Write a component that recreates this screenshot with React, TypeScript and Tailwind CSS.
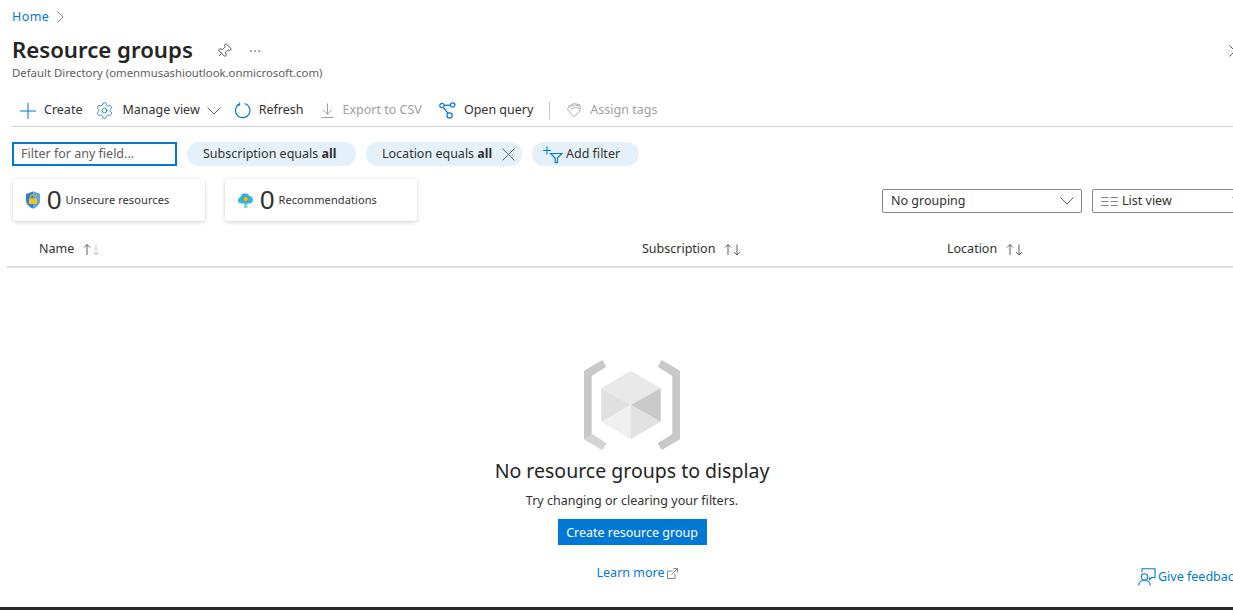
import { Ellipsis, Pin, Settings } from "lucide-react";

const PlusIcon = () => (
  <svg width="16" height="16" viewBox="0 0 16 16" fill="none" stroke="#0078d4" strokeWidth="1">
    <path d="M8 0v16M0 8h16" />
  </svg>
);

const ChevronDownIcon = ({ color = "#605e5c" }: { color?: string }) => (
  <svg width="14" height="8" viewBox="0 0 14 8" fill="none" stroke={color} strokeWidth="1">
    <path d="M0.500 0.500 7 7l6.500-6.500" />
  </svg>
);

const ChevronRightIcon = ({ color = "#8a8886" }: { color?: string }) => (
  <svg width="7" height="12" viewBox="0 0 7 12" fill="none" stroke={color} strokeWidth="1">
    <path d="M0.500 0.500 6 6l-5.500 5.500" />
  </svg>
);

const CloseIcon = () => (
  <svg width="13" height="13" viewBox="0 0 13 13" fill="none" stroke="#605e5c" strokeWidth="1">
    <path d="M0.500 0.500 12.500 12.500M12.500 0.500 0.500 12.500" />
  </svg>
);

const RefreshIcon = () => (
  <svg width="17" height="17" viewBox="0 0 17 17" fill="none" stroke="#0078d4" strokeWidth="1.200">
    <path d="M5.200 2.200A7.200 7.200 0 1 0 10.500 1.500" />
    <path d="M5.600 0.400V3h-2.800" strokeWidth="1.100" />
  </svg>
);

const ExportIcon = () => (
  <svg width="15" height="16" viewBox="0 0 14 16" fill="none" stroke="#a19f9d" strokeWidth="1">
    <path d="M7 0.500V11M2.500 6.800 7 11.200l4.500-4.400M1 14.500h12" />
  </svg>
);

const QueryIcon = () => (
  <svg width="17" height="17" viewBox="0 0 17 17" fill="none" stroke="#0078d4" strokeWidth="1.200">
    <circle cx="3" cy="3.500" r="2.200" />
    <circle cx="13.700" cy="3" r="2.200" />
    <circle cx="10.500" cy="13.500" r="2.600" />
    <path d="M5.200 3.400 11.500 3.100M4.200 5.400 8.900 11.200" />
  </svg>
);

const TagIcon = () => (
  <svg width="16" height="17" viewBox="0 0 16 17" fill="none" stroke="#b3b0ad" strokeWidth="1">
    <path d="M1.500 7.500 8 14.800l6-5.600V3L8 1.500 3 4z" />
    <path d="M4 4.500 9.500 2.800l4 1.600M4.500 7l5.500-2 3.800 2" />
  </svg>
);

const FilterAddIcon = () => (
  <svg width="20" height="18" viewBox="0 0 20 18" fill="none" stroke="#0078d4" strokeWidth="1.100">
    <path d="M0 4.500h8M4 0.500v8" />
    <path d="M7.500 7.500h11.500l-4.600 4.500v4.600h-2.200V12z" />
  </svg>
);

const ShieldIcon = () => (
  <svg width="16" height="18" viewBox="0 0 16 18">
    <path d="M8 0.500 15 3v6c0 4.200-3.200 7-7 8.500C4.200 16 1 13.200 1 9V3z" fill="#2f7fd6" />
    <path d="M8 0.500 15 3v6c0 4.200-3.200 7-7 8.500z" fill="#5ea8e8" />
    <path d="M5.500 8V6.200a2.500 2.500 0 0 1 5 0V8" fill="none" stroke="#d9b43a" strokeWidth="1.200" />
    <rect x="4" y="7.500" width="8" height="5.500" rx="0.600" fill="#f6c417" />
  </svg>
);

const CloudIcon = () => (
  <svg width="17" height="18" viewBox="0 0 17 18">
    <rect x="7" y="9" width="3.500" height="8" fill="#7fdcc4" />
    <path d="M4 12.500a3.200 3.200 0 0 1-.6-6.300A4.800 4.800 0 0 1 12.500 5 3.800 3.800 0 0 1 13 12.500z" fill="#35b4e8" />
    <circle cx="8.700" cy="8" r="2.600" fill="#f2c500" stroke="#2a7fb8" strokeWidth="0.600" />
  </svg>
);

const SortIcon = ({ dim }: { dim?: boolean }) => (
  <svg width="17" height="13" viewBox="0 0 17 13" fill="none" strokeWidth="1">
    <path d="M4 12V1.500M1 4.500l3-3 3 3" stroke="#605e5c" />
    <path d="M13 1.500V12M10 9l3 3 3-3" stroke={dim ? "#c8c6c4" : "#605e5c"} />
  </svg>
);

const ListIcon = () => (
  <svg className="shrink-0" width="17" height="11" viewBox="0 0 17 11" fill="none" stroke="#8a8886" strokeWidth="1">
    <path d="M0 1.500h7.500M0 5.500h7.500M0 9.500h7.500M9.500 1.500H17M9.500 5.500H17M9.500 9.500H17" />
  </svg>
);

const EmptyIcon = () => (
  <svg width="96" height="91" viewBox="0 0 288 273">
    <path d="M55 0 0 32v206l55 32 12-20-44-28V48l44-28z" fill="#c8c8c8" />
    <path d="M0 238 23 222l44 28-12 20z" fill="#d4d4d4" />
    <path d="M233 0l55 32v206l-55 32-12-20 44-28V48l-44-28z" fill="#c8c8c8" />
    <path d="M140 32 230 85 140 135 52 85z" fill="#e9e9e9" />
    <path d="M52 85 140 135 52 185z" fill="#e0e0e0" />
    <path d="M230 85V185L140 135z" fill="#c9c9c9" />
    <path d="M52 185 140 135V238z" fill="#efefef" />
    <path d="M230 185 140 135V238z" fill="#e2e2e2" />
  </svg>
);

const FeedbackIcon = () => (
  <svg width="18" height="18" viewBox="0 0 18 18" fill="none" stroke="#0078d4" strokeWidth="1.100">
    <path d="M4 4.500V0.800h13v8.700h-3.500l-2 2V9.500" />
    <circle cx="6.500" cy="9" r="3.200" />
    <path d="M0.700 17.500c0-3 2.500-5.200 5.800-5.200s5.800 2.200 5.800 5.200" />
  </svg>
);

const ExternalIcon = () => (
  <svg width="11" height="11" viewBox="0 0 11 11" fill="none" stroke="#8a8886" strokeWidth="1">
    <path d="M8 5.500v5H0.500V3h5M6.500 0.500h4v4M10.500 0.500 4.500 6.500" />
  </svg>
);

function ToolItem({ icon, label, className, disabled }: { icon: React.ReactNode; label: string; className?: string; disabled?: boolean }) {
  return (
    <div className={`flex items-center ${className ?? ""}`}>
      {icon}
      <span className={`ml-2 ${disabled ? "text-[#a19f9d]" : "text-[#323130]"}`}>{label}</span>
    </div>
  );
}

function StatCard({ icon, label, className }: { icon: React.ReactNode; label: string; className?: string }) {
  return (
    <div className={`flex h-[42px] w-[192px] items-center rounded-[3px] bg-white pl-3 shadow-[0_1px_4px_rgba(0,0,0,0.2)] ${className ?? ""}`}>
      {icon}
      <span className="ml-[6px] text-[26px] leading-none text-[#323130] [font-family:'Liberation_Sans',sans-serif]">0</span>
      <span className="ml-[4px] text-[11px] tracking-[0.1px] text-[#323130]">{label}</span>
    </div>
  );
}

export default function App() {
  return (
    <div className="relative h-[610px] w-[1233px] overflow-hidden bg-white text-[12.500px] text-[#323130] [font-family:'Noto_Sans',sans-serif]">
      <div className="flex h-[607px] w-[1257px] flex-col">
        <div className="flex h-[33px] items-center pl-3 pt-[1px] text-[#0078d4]">
          <span className="tracking-[0.4px]">Home</span>
          <span className="ml-2"><ChevronRightIcon /></span>
        </div>

        <div className="flex items-center pl-3 pt-[1px]">
          <h1 className="text-[22.200px] font-semibold leading-[32px] text-[#252423]">Resource groups</h1>
          <Pin className="ml-[23px] mt-[1px] h-4 w-4 rotate-45 text-[#323130]" strokeWidth={1.200} />
          <Ellipsis className="ml-[16px] mt-[1px] h-[14px] w-[14px] text-[#605e5c]" strokeWidth={1} />
          <span className="ml-[967px] mt-[1px]"><ChevronRightIcon color="#605e5c" /></span>
        </div>
        <div className="pl-3 text-[11.350px] leading-[14px] text-[#605e5c]">Default Directory (omenmusashioutlook.onmicrosoft.com)</div>

        <div className="mx-3 mt-[9px] flex h-[38px] items-center border-b border-[#d2d0ce] pl-2 pt-[6px]">
          <ToolItem icon={<PlusIcon />} label="Create" />
          <ToolItem icon={<Settings className="h-[19px] w-[19px] text-[#0078d4]" strokeWidth={1} />} label="Manage view" className="ml-[13px]" />
          <span className="ml-[7px]"><ChevronDownIcon /></span>
          <ToolItem icon={<RefreshIcon />} label="Refresh" className="ml-[13px]" />
          <ToolItem icon={<ExportIcon />} label="Export to CSV" className="ml-[16px]" disabled />
          <ToolItem icon={<QueryIcon />} label="Open query" className="ml-[17px]" />
          <div className="ml-4 h-[17px] w-px bg-[#c8c6c4]" />
          <ToolItem icon={<TagIcon />} label="Assign tags" className="ml-[16px]" disabled />
        </div>

        <div className="mt-[15px] flex items-center pl-3">
          <div className="flex h-6 w-[165px] items-center border-2 border-[#0078d4] pl-[7px] pt-[1px] text-[#605e5c]">Filter for any field...</div>
          <div className="ml-[10px] flex h-6 w-[169px] items-center rounded-full bg-[#e5f1fa] pl-4 pt-[1px]">
            <span>Subscription equals <b>all</b></span>
          </div>
          <div className="ml-[10px] flex h-6 w-[156px] items-center rounded-full bg-[#e5f1fa] pl-4 pt-[1px]">
            <span>Location equals <b>all</b></span>
            <span className="ml-[10px]"><CloseIcon /></span>
          </div>
          <div className="ml-[10px] flex h-6 w-[107px] items-center rounded-full bg-[#e5f1fa] pl-[11px] pt-[1px]">
            <FilterAddIcon />
            <span className="ml-[3px]">Add filter</span>
          </div>
        </div>

        <div className="mt-[13px] flex h-[42px] items-start pl-[13px]">
          <StatCard icon={<ShieldIcon />} label="Unsecure resources" />
          <StatCard icon={<CloudIcon />} label="Recommendations" className="ml-5" />
          <div className="ml-[465px] mt-[10px] flex h-6 w-[200px] items-center justify-between rounded-[2px] border border-[#8a8886] pl-2 pr-[7px]">
            <span>No grouping</span>
            <ChevronDownIcon />
          </div>
          <div className="ml-[10px] mt-[10px] flex h-6 w-[154px] shrink-0 items-center whitespace-nowrap rounded-[2px] border border-[#8a8886] pl-2">
            <ListIcon />
            <span className="ml-[4px]">List view</span>
            <span className="ml-[60px]"><ChevronDownIcon /></span>
          </div>
        </div>

        <div className="ml-[7px] mt-[11px] flex h-9 items-center border-b-2 border-[#dcdcdc]">
          <div className="flex w-[635px] items-center pl-8">
            <span>Name</span>
            <span className="ml-[9px]"><SortIcon dim /></span>
          </div>
          <div className="flex w-[305px] items-center">
            <span>Subscription</span>
            <span className="ml-[9px]"><SortIcon /></span>
          </div>
          <div className="flex items-center">
            <span>Location</span>
            <span className="ml-[9px]"><SortIcon /></span>
          </div>
        </div>

        <div className="ml-[7px] flex flex-1 flex-col items-center pt-[92px]">
          <EmptyIcon />
          <div className="mt-[8px] text-[19.500px] leading-6 text-[#252423]">No resource groups to display</div>
          <div className="mt-[9px] leading-[18px]">Try changing or clearing your filters.</div>
          <div className="mt-[9px] flex h-[26px] w-[149px] items-center justify-center bg-[#0078d4] pt-[3px] text-white">Create resource group</div>
          <div className="ml-[11px] mt-[19px] flex items-center text-[#0078d4]">
            <span>Learn more</span>
            <span className="ml-[3px]"><ExternalIcon /></span>
          </div>
        </div>
      </div>

      <div className="absolute left-[1138px] top-[568px] flex items-center whitespace-nowrap text-[#0078d4]">
        <FeedbackIcon />
        <span className="ml-[2px]">Give feedback</span>
      </div>
      <div className="h-[3px] bg-[#26282a]" />
    </div>
  );
}
